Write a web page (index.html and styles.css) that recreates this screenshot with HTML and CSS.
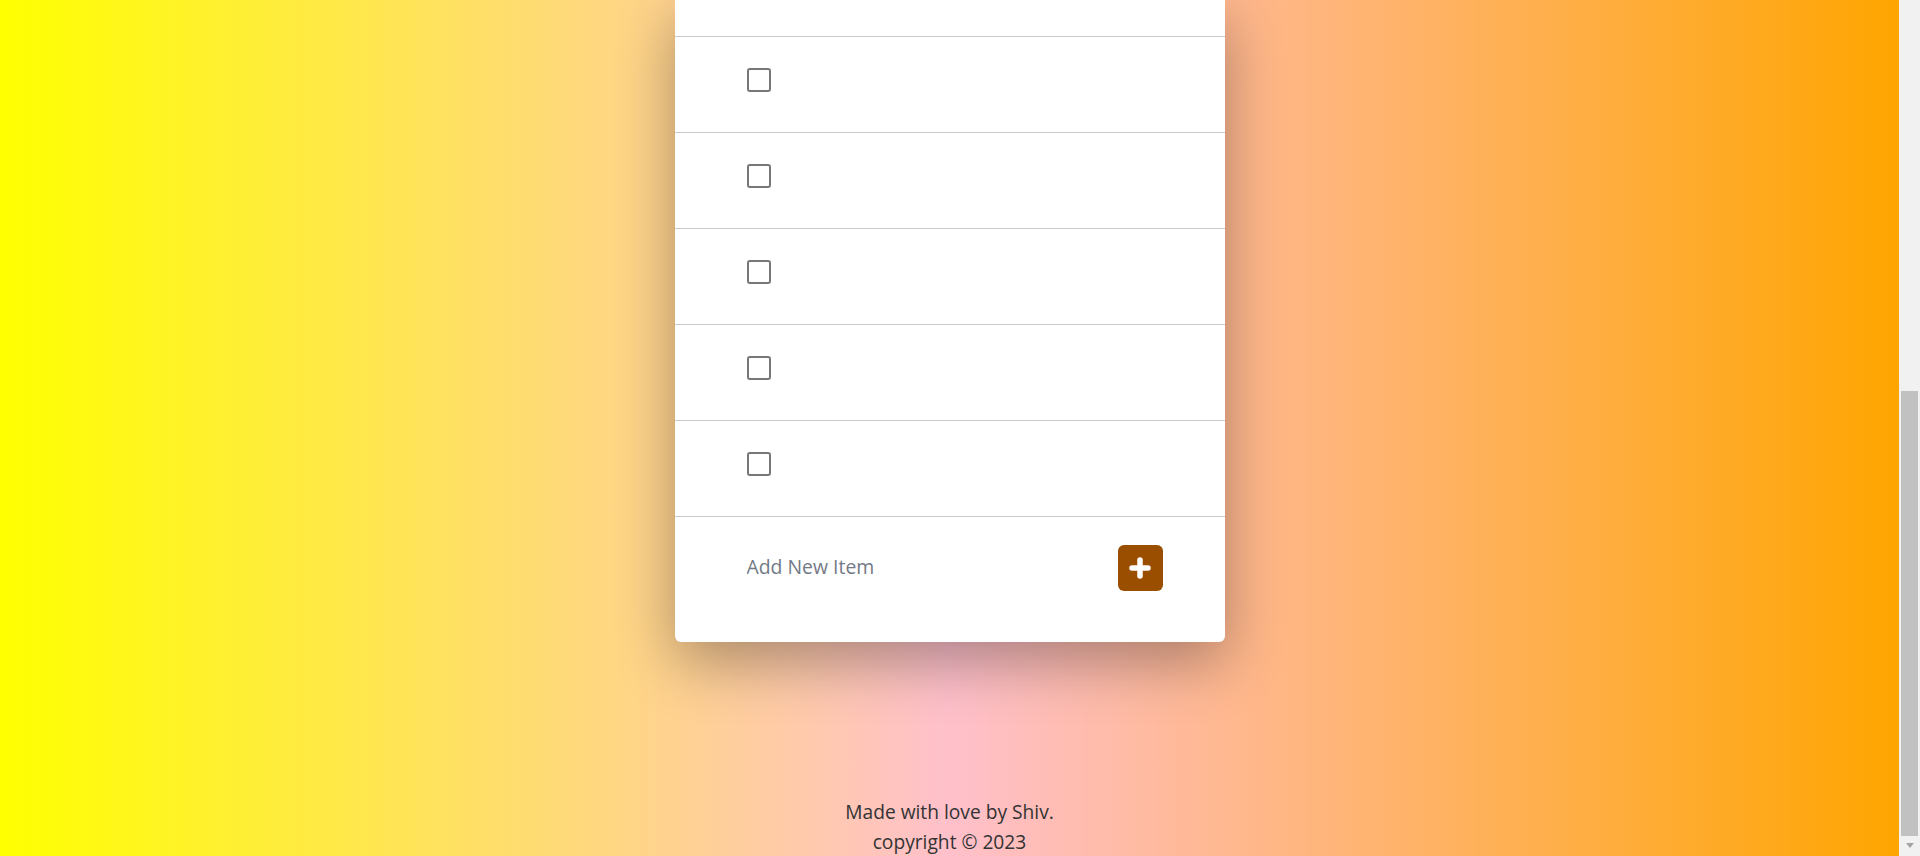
FILE: index.html
```html
<!DOCTYPE html>
<html lang="en">
<head>
<meta charset="utf-8">
<title>To-Do List</title>
<link rel="stylesheet" href="styles.css">
</head>
<body>
  <div class="page">
    <div class="card">
      <div class="stub"></div>
      <div class="item"><input type="checkbox" class="check"></div>
      <div class="item"><input type="checkbox" class="check"></div>
      <div class="item"><input type="checkbox" class="check"></div>
      <div class="item"><input type="checkbox" class="check"></div>
      <div class="item"><input type="checkbox" class="check"></div>
      <form class="add-form">
        <input type="text" class="add-input" placeholder="Add New Item">
        <button type="button" class="add-btn" aria-label="Add">
          <svg width="22" height="22" viewBox="0 0 22 22"><path d="M3 11H19M11 3V19" stroke="#fff" stroke-width="5.5" stroke-linecap="round" fill="none"/></svg>
        </button>
      </form>
    </div>
    <footer class="footer">
      <p>Made with love by Shiv.</p>
      <p>copyright © 2023</p>
    </footer>
  </div>
  <div class="scrollbar">
    <div class="thumb"></div>
    <div class="arrow-down"></div>
  </div>
</body>
</html>
```
FILE: styles.css
```css
html, body {
  margin: 0;
  padding: 0;
  height: 856px;
  overflow: hidden;
}
body {
  display: flex;
  font-family: "Open Sans", "Noto Sans", sans-serif;
}
.page {
  flex: 1;
  display: flex;
  flex-direction: column;
  align-items: center;
  background: linear-gradient(to right, #ffff00, #ffc0cb, #ffa500);
  overflow: hidden;
}
.card {
  width: 550px;
  background: #fff;
  border-radius: 0 0 6px 6px;
  box-shadow: 0 20px 60px rgba(0, 0, 0, 0.33);
  flex-shrink: 0;
}
.stub {
  height: 36px;
  border-bottom: 1px solid #c9c9c9;
}
.item {
  height: 96px;
  box-sizing: border-box;
  border-bottom: 1px solid #c9c9c9;
  display: flex;
  align-items: flex-start;
  padding: 31px 0 0 72px;
}
.check {
  appearance: none;
  -webkit-appearance: none;
  width: 24px;
  height: 24px;
  margin: 0;
  border: 2px solid #777;
  border-radius: 3px;
  background: #fff;
  box-sizing: border-box;
}
.add-form {
  display: flex;
  align-items: center;
  padding: 28px 62px 51px 72px;
  margin: 0;
}
.add-input {
  flex: 1;
  border: none;
  outline: none;
  padding: 0;
  font-family: "Open Sans", "Noto Sans", sans-serif;
  font-size: 19.4px;
  color: #333;
  background: transparent;
  margin-top: -4px;
}
.add-input::placeholder {
  color: #737a86;
}
.add-btn {
  width: 45px;
  height: 46px;
  border: none;
  border-radius: 6px;
  background: #9a4e00;
  padding: 0;
  display: flex;
  align-items: center;
  justify-content: center;
}
.footer {
  margin-top: 155px;
  text-align: center;
  color: #333;
  font-size: 19.2px;
  line-height: 30px;
}
.footer p {
  margin: 0;
}
.scrollbar {
  width: 21px;
  background: #f1f1f1;
  display: flex;
  flex-direction: column;
  align-items: center;
}
.thumb {
  margin-top: 391px;
  width: 17px;
  height: 445px;
  background: #c1c1c1;
}
.arrow-down {
  margin-top: 7px;
  width: 0;
  height: 0;
  border-left: 4.5px solid transparent;
  border-right: 4.5px solid transparent;
  border-top: 5px solid #a3a3a3;
}
```
